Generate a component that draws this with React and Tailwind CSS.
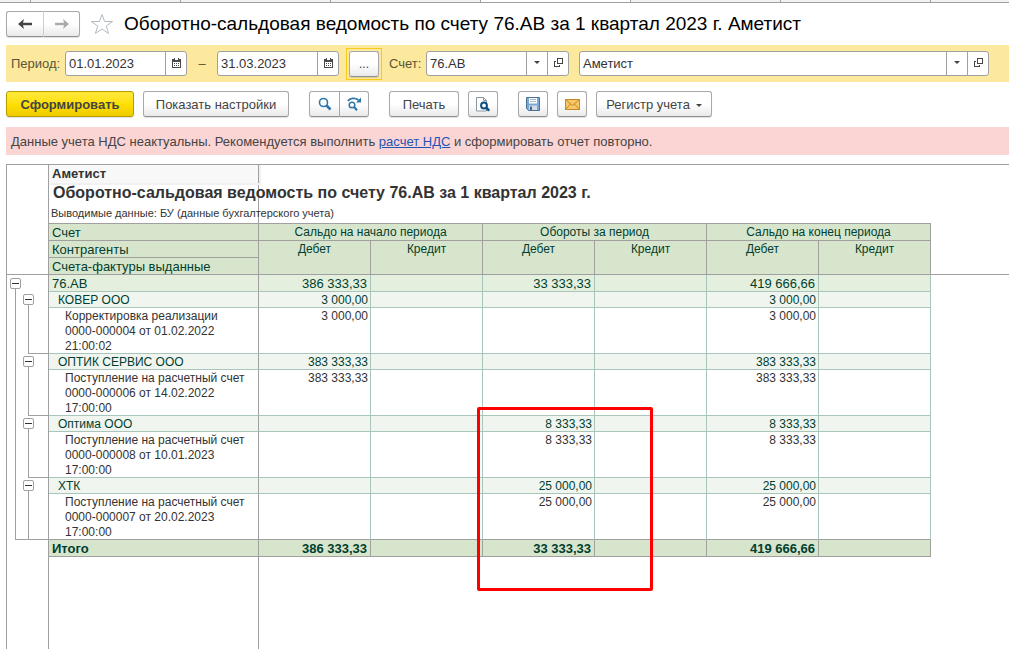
import React from "react";

const groups = [
  { name: "КОВЕР ООО", doc: ["Корректировка реализации", "0000-000004 от 01.02.2022", "21:00:02"], open: "3 000,00", turn: "", close: "3 000,00" },
  { name: "ОПТИК СЕРВИС ООО", doc: ["Поступление на расчетный счет", "0000-000006 от 14.02.2022", "17:00:00"], open: "383 333,33", turn: "", close: "383 333,33" },
  { name: "Оптима ООО", doc: ["Поступление на расчетный счет", "0000-000008 от 10.01.2023", "17:00:00"], open: "", turn: "8 333,33", close: "8 333,33" },
  { name: "ХТК", doc: ["Поступление на расчетный счет", "0000-000007 от 20.02.2023", "17:00:00"], open: "", turn: "25 000,00", close: "25 000,00" },
];

const tabCount = 6;
const activeTab = 3;

const buttonBase =
  "flex h-[26px] items-center justify-center border border-[#a9a9a9] border-b-[#8f8f8f] bg-gradient-to-b from-white from-50% to-[#e9e9e9] text-[#444] shadow-[0_1px_1px_rgba(0,0,0,0.12)]";

function ToolButton({ label, className = "", children }) {
  return (
    <button type="button" aria-label={label} className={`${buttonBase} rounded-[3px] ${className}`}>
      {children}
    </button>
  );
}

function CalendarIcon() {
  return (
    <svg width="9" height="10" viewBox="0 0 9 10" shapeRendering="crispEdges" aria-hidden="true">
      <path d="M0 1h9v9H0z" fill="#4a4a4a" />
      <path d="M1 4h7v5H1z" fill="#fff" />
      <path d="M2 0h1v2H2zM6 0h1v2H6z" fill="#4a4a4a" />
      <path d="M3 1h3v1H3z" fill="#fff" />
      <path d="M2 5h1v1H2zM4 5h1v1H4zM6 5h1v1H6zM2 7h1v1H2zM4 7h1v1H4zM6 7h1v1H6z" fill="#4a4a4a" />
    </svg>
  );
}

function CaretIcon() {
  return (
    <svg width="6" height="3" viewBox="0 0 6 3" aria-hidden="true">
      <path d="M0 0h6L3 3z" fill="#444" />
    </svg>
  );
}

function OpenIcon() {
  return (
    <svg width="9" height="9" viewBox="0 0 9 9" fill="none" stroke="#444" shapeRendering="crispEdges" aria-hidden="true">
      <path d="M3.500.5h5v5h-5z" />
      <path d="M2 3.500H.5v5h5V7" />
    </svg>
  );
}

function Arrow({ color, flip }) {
  return (
    <svg width="14" height="10" viewBox="0 0 14 10" className={flip ? "rotate-180" : ""} aria-hidden="true">
      <path d="M0 5 6 0 5 3.700h9v2.600H5L6 10z" fill={color} />
    </svg>
  );
}

function Field({ label, value, className, children }) {
  return (
    <div className={`flex h-[25px] overflow-hidden rounded-[3px] border border-[#a0a0a0] bg-white ${className}`}>
      <input type="text" aria-label={label} defaultValue={value} className="min-w-0 flex-1 bg-transparent px-[3px] text-[13px] text-[#333] outline-none" />
      {children}
    </div>
  );
}

function FieldButton({ label, children }) {
  return (
    <button type="button" aria-label={label} className="flex w-[21px] shrink-0 items-center justify-center border-l border-[#a0a0a0] pb-[2px]">
      {children}
    </button>
  );
}

function Collapse({ label, className }) {
  return (
    <span className={`absolute -right-[6px] top-0 bg-white ${className}`}>
      <button type="button" aria-label={label} className="flex size-[11px] items-center justify-center rounded-[2px] border border-[#a0a0a0] bg-white">
        <span className="h-px w-[7px] bg-[#333]" />
      </button>
    </span>
  );
}

const line = "border-[#a0a0a0]";
const soft = "border-[#a8c6bc]";

function Amounts({ open, turn, close, className, borders = soft }) {
  return [open, "", turn, "", close, ""].map((v, i) => (
    <td key={i} className={`border-b border-r py-0 pl-0 text-right align-top ${className} ${borders}`}>
      <div className="h-[15px]">{v}</div>
    </td>
  ));
}

function Report() {
  const head = `border-b border-r ${line} bg-[#d8e5cd] text-[#003f2f]`;
  return (
    <table className="w-full table-fixed border-separate border-spacing-0 text-[12px] leading-[15px] text-[#333]">
      <colgroup>
        <col className="w-[9px]" />
        <col className="w-[13px]" />
        <col className="w-[20px]" />
        <col className="w-[210px]" />
        <col className="w-[112px]" />
        <col className="w-[112px]" />
        <col className="w-[112px]" />
        <col className="w-[112px]" />
        <col className="w-[112px]" />
        <col className="w-[112px]" />
        <col />
      </colgroup>
      <thead className="text-left font-normal">
        <tr className="h-[18px]">
          <td colSpan={3} className={`border-r ${line}`} />
          <td className={`relative border-r ${line} p-0`}>
            <div className="absolute -right-[3px] left-0 top-0 h-5 border-b-2 border-r-2 border-[#f1f1f1]" />
            <div className="h-[18px] bg-[#f8f8f8] pl-[3px] text-[13px] font-bold leading-[17px]">Аметист</div>
          </td>
          <td colSpan={7} />
        </tr>
        <tr className="h-[20px]">
          <td colSpan={3} className={`border-r ${line}`} />
          <td className={`whitespace-nowrap border-r ${line} p-0 pl-1 text-[16px] font-bold leading-[18px]`}>
            Оборотно-сальдовая ведомость по счету 76.АВ за 1 квартал 2023 г.
          </td>
          <td colSpan={7} />
        </tr>
        <tr className="h-[21px]">
          <td colSpan={3} className={`border-r ${line}`} />
          <td className={`whitespace-nowrap border-b border-r ${line} p-0 pl-[2px] text-[11px]`}>
            Выводимые данные: БУ (данные бухгалтерского учета)
          </td>
          <td colSpan={6} className={`border-b ${line}`} />
          <td />
        </tr>
        <tr className="h-[17px]">
          <td colSpan={3} className={`border-r ${line}`} />
          <th scope="col" className={`${head} p-0 pl-[3px] text-[13px] font-normal`}>Счет</th>
          <th scope="colgroup" colSpan={2} className={`${head} p-0 text-center font-normal`}>Сальдо на начало периода</th>
          <th scope="colgroup" colSpan={2} className={`${head} p-0 text-center font-normal`}>Обороты за период</th>
          <th scope="colgroup" colSpan={2} className={`${head} p-0 text-center font-normal`}>Сальдо на конец периода</th>
          <td />
        </tr>
        <tr className="h-[17px]">
          <td colSpan={3} className={`border-r ${line}`} />
          <th scope="col" className={`${head} p-0 pl-[3px] text-[13px] font-normal`}>Контрагенты</th>
          {["Дебет", "Кредит", "Дебет", "Кредит", "Дебет", "Кредит"].map((t, i) => (
            <th key={i} scope="col" rowSpan={2} className={`${head} p-0 pt-px text-center align-top font-normal`}>{t}</th>
          ))}
          <td />
        </tr>
        <tr className="h-[17px]">
          <td colSpan={3} className={`border-b border-r ${line}`} />
          <th scope="col" className={`${head} p-0 pl-[3px] text-[13px] font-normal`}>Счета-фактуры выданные</th>
          <td className={`border-b ${line}`} />
        </tr>
      </thead>
      <tbody>
        <tr className="h-[17px] bg-[#e4efde] text-[13px] leading-[17px] text-[#003f2f]">
          <td className={`relative border-r ${line} bg-white p-0`}><Collapse label="Свернуть 76.АВ" className="pt-[3px]" /></td>
          <td className="bg-white" />
          <td className={`border-r ${line} bg-white`} />
          <td className="border-b border-r border-b-[#a8c6bc] border-r-[#a0a0a0] p-0 pl-[3px] align-top"><div className="h-[15px]">76.АВ</div></td>
          <Amounts open="386 333,33" turn="33 333,33" close="419 666,66" className="pr-[3px]" />
          <td className="bg-white" />
        </tr>
        {groups.map((g, i) => {
          const last = i === groups.length - 1;
          return (
            <React.Fragment key={g.name}>
              <tr className="h-[16px] bg-[#f0f5ef] leading-[17px] text-[#003f2f]">
                <td className={`border-r ${line} bg-white p-0`} />
                <td className={`relative border-r ${line} bg-white p-0`}><Collapse label={`Свернуть ${g.name}`} className="pt-[2px]" /></td>
                <td className={`border-r ${line} bg-white p-0`} />
                <td className="border-b border-r border-b-[#a8c6bc] border-r-[#a0a0a0] p-0 pl-[9px]"><div className="h-[15px]">{g.name}</div></td>
                <Amounts {...g} className="pr-[2px]" />
                <td className="bg-white p-0" />
              </tr>
              <tr className="h-[46px]">
                <td className={`border-r ${line} p-0`} />
                <td className={`border-r ${last ? "border-b" : ""} ${line} p-0`} />
                <td className={`border-b border-r ${line} p-0`} />
                <td className={`whitespace-nowrap border-b border-r border-r-[#a0a0a0] ${last ? "border-b-[#a0a0a0]" : "border-b-[#a8c6bc]"} p-0 pl-[16px]`}>
                  <div className="h-[45px] pt-px">
                    {g.doc.map((t) => <div key={t}>{t}</div>)}
                  </div>
                </td>
                <Amounts {...g} className="pr-[2px] leading-[17px]" borders={last ? "border-b-[#a0a0a0] border-r-[#a8c6bc]" : soft} />
                <td className="p-0" />
              </tr>
            </React.Fragment>
          );
        })}
      </tbody>
      <tfoot>
        <tr className="h-[17px] bg-[#d8e5cd] text-[13px] font-bold leading-[17px] text-[#003f2f]">
          <td colSpan={3} className={`border-r ${line} bg-white p-0`} />
          <td className={`border-b border-r ${line} p-0 pl-[3px] align-top`}><div className="h-[15px]">Итого</div></td>
          <Amounts open="386 333,33" turn="33 333,33" close="419 666,66" className="pr-[3px]" borders={line} />
          <td className="bg-white p-0" />
        </tr>
      </tfoot>
    </table>
  );
}

export default function App() {
  return (
    <div className="flex min-h-screen flex-col overflow-hidden bg-white font-['Liberation_Sans',Arial,sans-serif] text-[13px] text-[#444]">
      <div className="flex h-[3px] border-b border-[#a0a0a0] bg-[#f2f2f2]">
        <span className="w-[31px] shrink-0 border-r border-[#a0a0a0]" />
        {Array.from({ length: tabCount }, (_, i) => (
          <span key={i} className={`w-[150px] shrink-0 border-r border-[#a0a0a0] ${i === activeTab ? "bg-white" : ""}`} />
        ))}
      </div>

      <header className="flex items-center pl-[6px] pt-[8px]">
        <div className="flex">
          <button type="button" aria-label="Назад" className={`${buttonBase} w-[38px] rounded-l-[3px] border-r-[#d0d0d0]`}><Arrow color="#444" /></button>
          <button type="button" aria-label="Вперед" className={`${buttonBase} w-[36px] rounded-r-[3px] border-l-0`}><Arrow color="#aaa" flip /></button>
        </div>
        <button type="button" aria-label="В избранное" className="ml-[10px]">
          <svg width="24" height="22" viewBox="0 0 24 22" fill="#fff" stroke="#b4bac0" aria-hidden="true">
            <path d="M12 1.500l2.600 7h8L16.200 13l2.400 7.500L12 16l-6.600 4.500L7.800 13 1.400 8.500h8z" />
          </svg>
        </button>
        <h1 className="ml-[10px] whitespace-nowrap text-[19px] leading-[26px] text-black">
          Оборотно-сальдовая ведомость по счету 76.АВ за 1 квартал 2023 г. Аметист
        </h1>
      </header>

      <div className="ml-[6px] mt-[8px] flex h-[37px] items-center bg-[#fce99e] pl-[5px] pr-[20px] text-[#5b5436]">
        <span className="w-[54px]">Период:</span>
        <Field label="Начало периода" value="01.01.2023" className="w-[122px]">
          <FieldButton label="Выбрать дату начала"><CalendarIcon /></FieldButton>
        </Field>
        <span className="w-[30px] text-center">–</span>
        <Field label="Конец периода" value="31.03.2023" className="w-[122px]">
          <FieldButton label="Выбрать дату конца"><CalendarIcon /></FieldButton>
        </Field>
        <div className="ml-[7px] border border-[#f7c91c] p-[2px]">
          <ToolButton label="Выбрать период" className="w-[30px] text-[12px]">...</ToolButton>
        </div>
        <span className="ml-[7px] w-[37px]">Счет:</span>
        <Field label="Счет" value="76.АВ" className="w-[143px]">
          <FieldButton label="Список счетов"><CaretIcon /></FieldButton>
          <FieldButton label="Открыть счет"><OpenIcon /></FieldButton>
        </Field>
        <Field label="Организация" value="Аметист" className="ml-[10px] min-w-0 flex-1">
          <FieldButton label="Список организаций"><CaretIcon /></FieldButton>
          <FieldButton label="Открыть организацию"><OpenIcon /></FieldButton>
        </Field>
      </div>

      <div className="ml-[6px] mt-[9px] flex items-center">
        <button type="button" className="h-[26px] w-[128px] rounded-[3px] border border-[#b59d00] bg-gradient-to-b from-[#ffe83a] via-[#ffe000] to-[#efcb00] pt-[2px] text-[13px] font-bold text-[#444] shadow-[0_1px_1px_rgba(0,0,0,0.12)]">
          Сформировать
        </button>
        <ToolButton className="ml-[9px] w-[146px] pt-[2px]">Показать настройки</ToolButton>
        <div className="ml-[20px] flex">
          <button type="button" aria-label="Найти" className={`${buttonBase} w-[31px] rounded-l-[3px]`}>
            <svg width="14" height="14" viewBox="0 0 14 14" fill="none" stroke="#2f76ab" aria-hidden="true">
              <circle cx="5.500" cy="5.500" r="4" strokeWidth="1.600" />
              <path d="M8.500 8.500l4 4" strokeWidth="2.600" />
            </svg>
          </button>
          <button type="button" aria-label="Найти далее" className={`${buttonBase} w-[29px] rounded-r-[3px] border-l-0`}>
            <svg width="15" height="14" viewBox="0 0 15 14" fill="none" stroke="#2f76ab" aria-hidden="true">
              <path d="M1 4C2.500 1 8 .5 11.500 3" strokeWidth="1.800" />
              <path d="M14 .5v5H9z" fill="#2f76ab" stroke="none" />
              <circle cx="5" cy="8" r="2.800" strokeWidth="1.500" />
              <path d="M7 10l3 3.200" strokeWidth="2.200" />
            </svg>
          </button>
        </div>
        <ToolButton className="ml-[20px] w-[70px] pt-[2px]">Печать</ToolButton>
        <ToolButton label="Предварительный просмотр" className="ml-[9px] w-[30px]">
          <svg width="14" height="15" viewBox="0 0 14 15" fill="none" aria-hidden="true">
            <path d="M.5.500h7l3 3v10.500H.5z" fill="#fff" stroke="#8a97a3" />
            <path d="M7.500.5v3h3" stroke="#8a97a3" />
            <circle cx="8" cy="8.500" r="2.900" fill="#fff" stroke="#0d4f80" strokeWidth="2" />
            <path d="M10 10.500l3.200 3.200" stroke="#0d4f80" strokeWidth="2.600" />
          </svg>
        </ToolButton>
        <ToolButton label="Сохранить" className="ml-[20px] w-[30px]">
          <svg width="14" height="14" viewBox="0 0 14 14" aria-hidden="true">
            <path d="M.5.500h13v13h-11l-2-2z" fill="#7ba8d6" stroke="#4a7295" />
            <path d="M3 1h8v5.500H3z" fill="#fff" />
            <path d="M4 2.500h6M4 4.500h6" stroke="#a9b6c2" />
            <path d="M3 8.500h8V13H3z" fill="#d5dde4" />
            <path d="M4 9.500h2V13H4z" fill="#41688b" />
          </svg>
        </ToolButton>
        <ToolButton label="Отправить по почте" className="ml-[9px] w-[30px]">
          <svg width="15" height="11" viewBox="0 0 15 11" fill="none" stroke="#c8862a" aria-hidden="true">
            <path d="M.5.500h14v10H.5z" fill="#f7c766" />
            <path d="M.5.500l7 6 7-6M.5 10.500l5-5.500M14.500 10.500l-5-5.500" />
          </svg>
        </ToolButton>
        <ToolButton className="ml-[9px] w-[116px] gap-[6px] pt-[2px]">Регистр учета <CaretIcon /></ToolButton>
      </div>

      <p className="ml-[6px] mt-[10px] h-[28px] bg-[#fbd4d4] pl-[5px] leading-[29px] text-[#444]">
        Данные учета НДС неактуальны. Рекомендуется выполнить{" "}
        <a href="#vat" className="text-[#2454b5] underline">расчет НДС</a> и сформировать отчет повторно.
      </p>

      <main className="relative ml-[6px] mt-[9px] flex flex-1 flex-col border-l border-t border-[#a0a0a0]">
        <Report />
        <div className="flex flex-1">
          <div className="w-[42px] border-r border-[#a0a0a0]" />
          <div className="w-[210px] border-r border-[#a0a0a0]" />
        </div>
        <div className="pointer-events-none absolute left-[470px] top-[242px] h-[184px] w-[176px] rounded-[2px] border-[3px] border-[#fe0000]" />
      </main>
    </div>
  );
}
